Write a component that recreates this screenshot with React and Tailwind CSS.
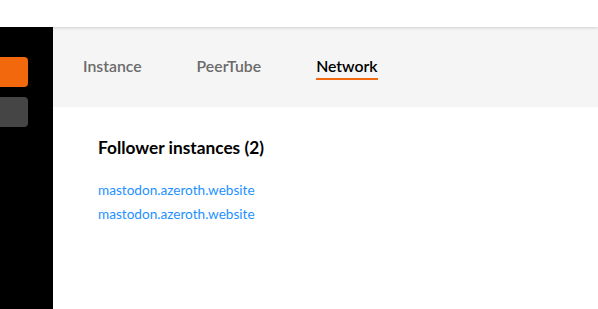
import React from "react";

const TABS = ["Instance", "PeerTube", "Network"];
const FOLLOWERS = ["mastodon.azeroth.website", "mastodon.azeroth.website"];

export default function App() {
  return (
    <div className="w-[598px] h-[309px] overflow-hidden bg-white flex flex-col font-['Lato',sans-serif]">
      {/* Top header */}
      <div className="h-[27px] shrink-0 bg-white shadow-[0_1px_3px_rgba(0,0,0,0.15)] relative z-10"></div>

      <div className="flex flex-grow">
        {/* Sidebar */}
        <div className="w-[53px] bg-black pt-[30px] flex flex-col gap-[10px]">
          <div className="w-[28px] h-[30px] bg-[#f2680d] rounded-r-[4px]"></div>
          <div className="w-[28px] h-[30px] bg-[#454545] rounded-r-[4px]"></div>
        </div>

        {/* Main */}
        <div className="flex-grow flex flex-col">
          <div className="h-[80px] bg-[#f5f5f5] flex items-start pl-[30px] pt-[29px] gap-[55px]">
            {TABS.map((t) => {
              const active = t === "Network";
              return (
                <div
                  key={t}
                  className={`text-[15.8px] font-semibold leading-[20px] pb-[2px] border-b-2 ${
                    active ? "text-black border-[#f2680d]" : "text-[#6b6b6b] border-transparent"
                  }`}
                >
                  {t}
                </div>
              );
            })}
          </div>

          <div className="pl-[45px] pt-[30px]">
            <h2 className="text-[17.3px] font-bold text-black leading-[22px] mb-[21px]">
              Follower instances ({FOLLOWERS.length})
            </h2>
            <div className="flex flex-col gap-[4px]">
              {FOLLOWERS.map((f, i) => (
                <a key={i} href="#" className="text-[13.6px] text-[#1e90ff] leading-[20px]">
                  {f}
                </a>
              ))}
            </div>
          </div>
        </div>
      </div>
    </div>
  );
}
